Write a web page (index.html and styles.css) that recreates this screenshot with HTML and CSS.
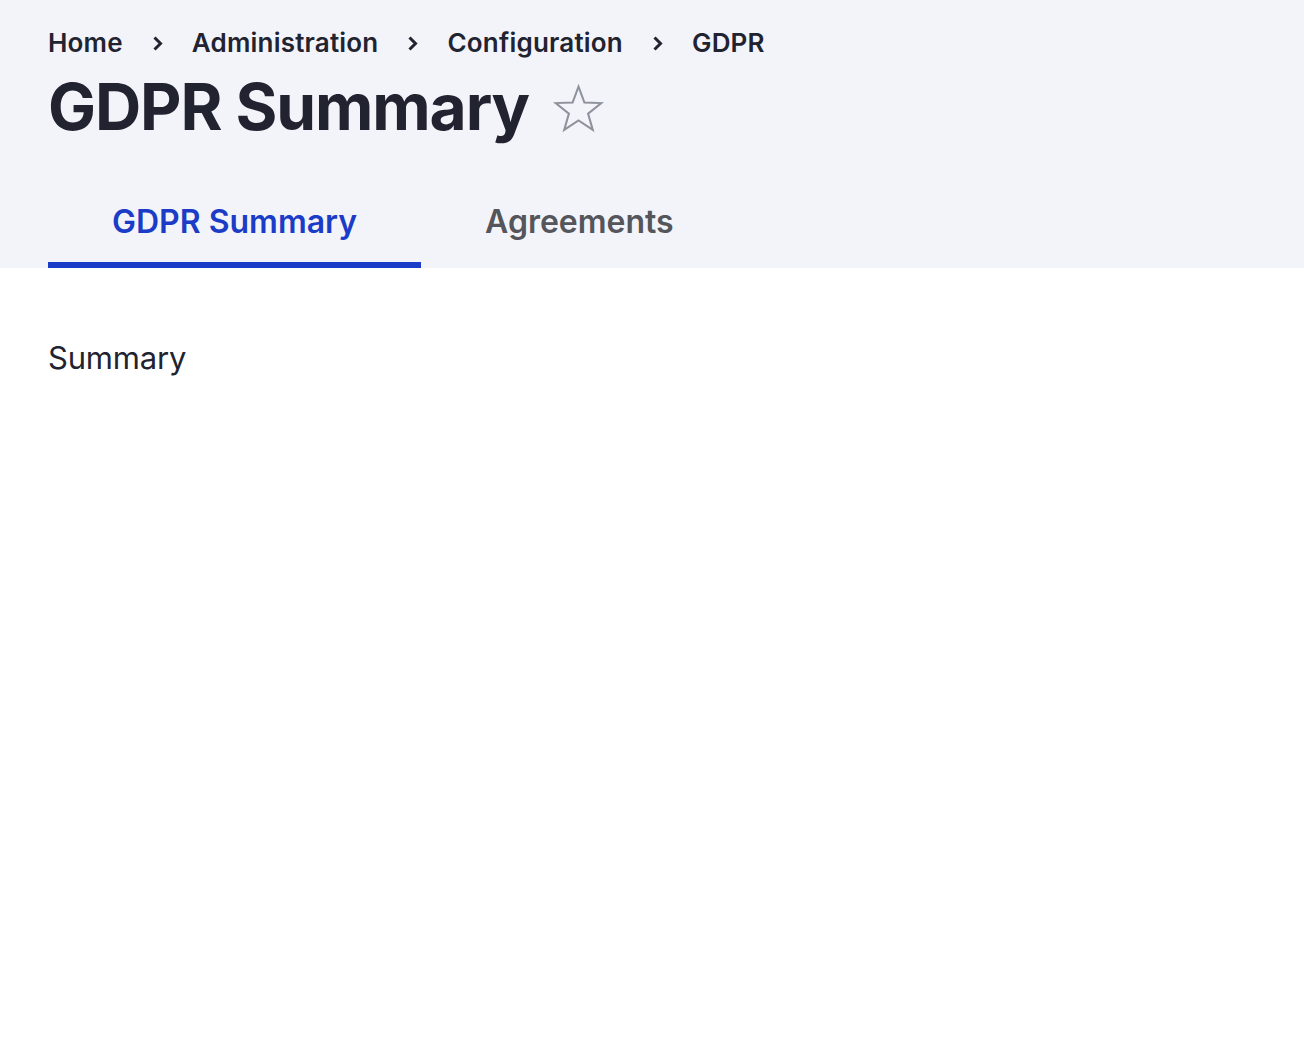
FILE: index.html
```html
<!DOCTYPE html>
<html lang="en">
<head>
  <meta charset="UTF-8">
  <meta name="viewport" content="width=device-width, initial-scale=1.0">
  <title>GDPR Summary</title>
  <link rel="stylesheet" href="styles.css">
</head>
<body>
  <!-- Page header -->
  <div class="region-header">
    <nav class="breadcrumb" aria-label="Breadcrumb">
      <a href="#">Home</a>
      <svg class="sep" viewBox="0 0 10 14" aria-hidden="true"><path d="M3 3l4 4-4 4" fill="none" stroke="#222330" stroke-width="2"/></svg>
      <a href="#">Administration</a>
      <svg class="sep" viewBox="0 0 10 14" aria-hidden="true"><path d="M3 3l4 4-4 4" fill="none" stroke="#222330" stroke-width="2"/></svg>
      <a href="#">Configuration</a>
      <svg class="sep" viewBox="0 0 10 14" aria-hidden="true"><path d="M3 3l4 4-4 4" fill="none" stroke="#222330" stroke-width="2"/></svg>
      <a href="#">GDPR</a>
    </nav>

    <div class="title-row">
      <h1 class="page-title">GDPR Summary</h1>
      <svg class="shortcut" viewBox="0 0 50 50" aria-label="Add to shortcuts">
        <path d="M25 3.5l5.8 15.6 16.6 0.6-13 10.3 4.6 16-14-9.3-14 9.3 4.6-16-13-10.3 16.6-0.6z" fill="none" stroke="#8e929c" stroke-width="2" stroke-linejoin="miter"/>
      </svg>
    </div>

    <ul class="tabs">
      <li class="tab is-active"><a href="#">GDPR Summary</a></li>
      <li class="tab"><a href="#">Agreements</a></li>
    </ul>
  </div>

  <!-- Content -->
  <main class="content">
    <p class="summary">Summary</p>
  </main>
</body>
</html>
```

FILE: styles.css
```css
:root {
  --text-dark: #222330;
  --text-muted: #55565b;
  --blue: #1b3cc7;
  --header-bg: #f3f4f9;
}

body {
  margin: 0;
  font-family: Inter, "Noto Sans", Arial, sans-serif;
  color: var(--text-dark);
  background: #fff;
}

/* Header */
.region-header {
  background: var(--header-bg);
  padding: 26px 48px 0;
}

.breadcrumb {
  display: flex;
  align-items: center;
  gap: 27px;
  font-size: 26px;
  font-weight: 600;
  line-height: 34px;
  letter-spacing: 0.2px;
}

.breadcrumb a {
  color: var(--text-dark);
  text-decoration: none;
}

.breadcrumb .sep {
  width: 15px;
  height: 21px;
}

.title-row {
  display: flex;
  align-items: center;
  gap: 24px;
  margin-top: 9px;
}

.page-title {
  margin: 0;
  font-size: 64px;
  font-weight: 700;
  line-height: 76px;
  letter-spacing: -1.1px;
}

.shortcut {
  width: 51px;
  height: 51px;
  margin-top: 2px;
}

/* Tabs */
.tabs {
  display: flex;
  list-style: none;
  margin: 47px 0 0;
  padding: 0;
}

.tab a {
  display: block;
  padding: 10px 64px 20px;
  font-size: 32px;
  font-weight: 600;
  line-height: 40px;
  color: var(--text-muted);
  text-decoration: none;
  border-bottom: 6px solid transparent;
}

.tab.is-active a {
  color: var(--blue);
  border-bottom-color: var(--blue);
}

/* Content */
.content {
  padding: 70px 48px;
}

.summary {
  margin: 0;
  font-size: 31px;
  line-height: 40px;
  letter-spacing: -0.2px;
}
```
